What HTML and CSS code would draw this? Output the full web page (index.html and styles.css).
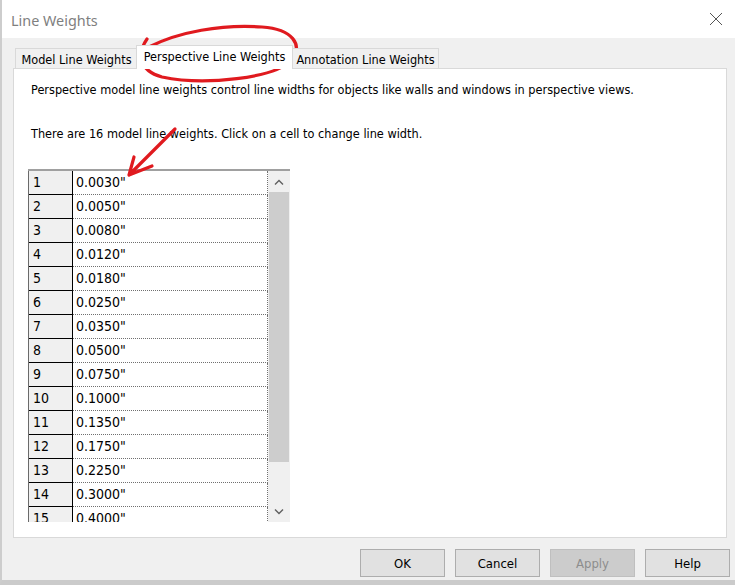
FILE: index.html
```html
<!DOCTYPE html>
<html>
<head>
<meta charset="utf-8">
<link rel="stylesheet" href="styles.css">
</head>
<body>
<div class="window">
  <div class="titlebar">
    <span class="title">Line Weights</span>
    <svg class="close" width="14" height="14" viewBox="0 0 14 14"><path d="M1 1L13 13M13 1L1 13" stroke="#555" stroke-width="1" fill="none"/></svg>
  </div>
  <div class="content">
    <div class="tabs">
      <div class="tab tab-model">Model Line Weights</div>
      <div class="tab tab-active">Perspective Line Weights</div>
      <div class="tab tab-anno">Annotation Line Weights</div>
    </div>
    <div class="panel">
      <p class="desc">Perspective model line weights control line widths for objects like walls and windows in perspective views.</p>
      <p class="desc desc2">There are 16 model line weights. Click on a cell to change line width.</p>
      <div class="grid">
        <div class="rows">
          <div class="row"><div class="num">1</div><div class="val">0.0030"</div></div>
          <div class="row"><div class="num">2</div><div class="val">0.0050"</div></div>
          <div class="row"><div class="num">3</div><div class="val">0.0080"</div></div>
          <div class="row"><div class="num">4</div><div class="val">0.0120"</div></div>
          <div class="row"><div class="num">5</div><div class="val">0.0180"</div></div>
          <div class="row"><div class="num">6</div><div class="val">0.0250"</div></div>
          <div class="row"><div class="num">7</div><div class="val">0.0350"</div></div>
          <div class="row"><div class="num">8</div><div class="val">0.0500"</div></div>
          <div class="row"><div class="num">9</div><div class="val">0.0750"</div></div>
          <div class="row"><div class="num">10</div><div class="val">0.1000"</div></div>
          <div class="row"><div class="num">11</div><div class="val">0.1350"</div></div>
          <div class="row"><div class="num">12</div><div class="val">0.1750"</div></div>
          <div class="row"><div class="num">13</div><div class="val">0.2250"</div></div>
          <div class="row"><div class="num">14</div><div class="val">0.3000"</div></div>
          <div class="row"><div class="num">15</div><div class="val">0.4000"</div></div>
        </div>
        <div class="scrollbar">
          <div class="sb-btn"><svg width="10" height="6" viewBox="0 0 10 6"><path d="M1 5.5L5 1.5L9 5.5" stroke="#606060" stroke-width="1.4" fill="none"/></svg></div>
          <div class="sb-track"><div class="sb-thumb"></div></div>
          <div class="sb-btn"><svg width="10" height="6" viewBox="0 0 10 6"><path d="M1 0.5L5 4.5L9 0.5" stroke="#606060" stroke-width="1.4" fill="none"/></svg></div>
        </div>
      </div>
    </div>
    <div class="buttons">
      <div class="btn">OK</div>
      <div class="btn">Cancel</div>
      <div class="btn btn-disabled">Apply</div>
      <div class="btn">Help</div>
    </div>
  </div>
  <svg class="annot" width="735" height="585" viewBox="0 0 735 585">
    <path d="M147,39 C138,52 137,70 162,77 C205,86 275,78 292,60 C303,45 293,29 262,27 C222,24 178,32 149,47" stroke="#e01a1f" stroke-width="3.2" fill="none" stroke-linecap="round"/>
    <path d="M175,129 L129,175 M129,175 L134,157 M129,175 L152,166" stroke="#e01a1f" stroke-width="3.2" fill="none" stroke-linecap="round" stroke-linejoin="round"/>
  </svg>
</div>
</body>
</html>
```
FILE: styles.css
```css
html, body {
  margin: 0;
  padding: 0;
}
body {
  font-family: "DejaVu Sans Condensed", "Liberation Sans", sans-serif;
  font-size: 12.6px;
  color: #000;
  background: #f0f0f0;
}
.window {
  position: relative;
  width: 735px;
  height: 585px;
  box-sizing: border-box;
  border-left: 2px solid #cdcdcd;
  border-bottom: 5px solid #cbcbcb;
  background: #f0f0f0;
  display: flex;
  flex-direction: column;
  overflow: hidden;
}
.titlebar {
  height: 38px;
  background: #fff;
  display: flex;
  align-items: center;
  justify-content: space-between;
  padding: 0 12px 0 9px;
  flex-shrink: 0;
}
.title {
  font-family: "Noto Sans", "Open Sans", sans-serif;
  font-size: 14.4px;
  color: #7f7f7f;
  position: relative;
  top: 1px;
}
.close {
  display: block;
}
.content {
  flex: 1;
  padding: 7px 0 0 11px;
  display: flex;
  flex-direction: column;
}
.tabs {
  display: flex;
  align-items: flex-end;
  height: 23px;
  padding-left: 2px;
  position: relative;
  z-index: 1;
}
.tab {
  height: 20px;
  box-sizing: border-box;
  border: 1px solid #d9d9d9;
  border-bottom: none;
  background: #f0f0f0;
  display: flex;
  align-items: center;
  justify-content: center;
  white-space: nowrap;
  padding-top: 2px;
}
.tab-model {
  width: 123px;
}
.tab-active {
  width: 157px;
  height: 24px;
  margin: 0 -1px -1px -2px;
  background: #fff;
  padding-top: 0;
  padding-bottom: 2px;
}
.tab-anno {
  width: 147px;
}
.panel {
  width: 714px;
  height: 470px;
  box-sizing: border-box;
  border: 1px solid #d9d9d9;
  background: #fff;
  padding: 12px 0 0 14px;
}
.desc {
  margin: 0;
  line-height: 17px;
  padding-left: 3px;
  white-space: nowrap;
}
.desc2 {
  margin-top: 27px;
}
.grid {
  margin-top: 27px;
  width: 262px;
  height: 353px;
  box-sizing: border-box;
  border-top: 2px solid #a0a0a0;
  display: flex;
  overflow: hidden;
}
.rows {
  width: 240px;
  flex-shrink: 0;
  border-left: 1px solid #6a6a6a;
  box-sizing: border-box;
}
.row {
  display: flex;
  height: 24px;
}
.num {
  width: 44px;
  background: #f0f0f0;
  border-right: 1px solid #000;
  border-bottom: 1px solid #000;
  padding-left: 4px;
  box-sizing: border-box;
  font-size: 14px;
  line-height: 23px;
}
.val {
  width: 195px;
  box-sizing: border-box;
  border-right: 1px dotted #707070;
  border-bottom: 1px dotted #707070;
  padding-left: 3px;
  font-size: 14px;
  line-height: 23px;
}
.scrollbar {
  width: 22px;
  background: #f0f0f0;
  display: flex;
  flex-direction: column;
}
.sb-btn {
  height: 21px;
  display: flex;
  align-items: center;
  justify-content: center;
  flex-shrink: 0;
}
.sb-track {
  flex: 1;
  padding: 0 1px 0 1px;
}
.sb-thumb {
  height: 270px;
  background: #cdcdcd;
}
.buttons {
  display: flex;
  gap: 10px;
  padding-left: 347px;
  margin-top: 11px;
}
.btn {
  width: 85px;
  height: 28px;
  box-sizing: border-box;
  border: 1px solid #adadad;
  background: #e1e1e1;
  display: flex;
  align-items: center;
  justify-content: center;
  font-size: 13px;
}
.btn-disabled {
  background: #cccccc;
  border-color: #bfbfbf;
  color: #8d8d8d;
}
.annot {
  position: absolute;
  left: -2px;
  top: 0;
  pointer-events: none;
}
```
